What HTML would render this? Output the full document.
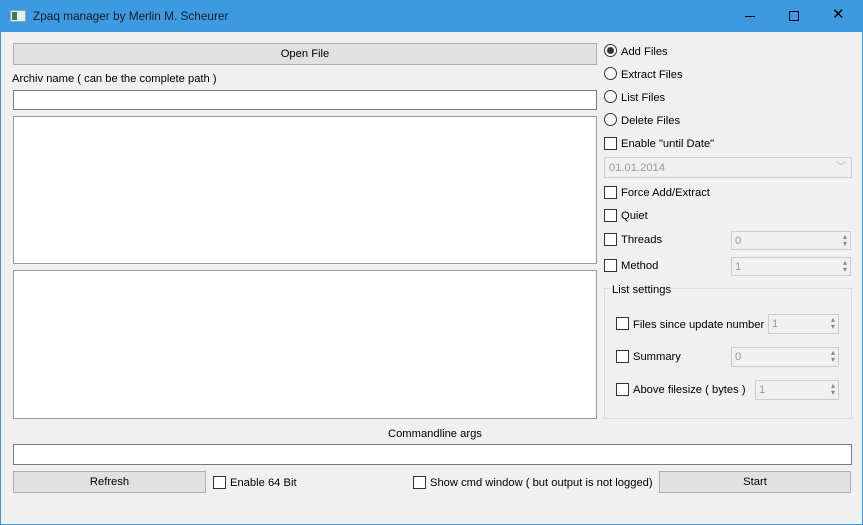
<!DOCTYPE html>
<html><head><style>
*{box-sizing:border-box;margin:0;padding:0}
body{width:863px;height:525px;position:relative;overflow:hidden;background:#f0f0f0;font:11.2px "Liberation Sans",sans-serif;color:#000;border:1px solid #3d9ae0}
.a{position:absolute}
.t{position:absolute;white-space:nowrap;line-height:14px;margin-top:1px}
.btn{position:absolute;background:#e1e1e1;border:1px solid #adadad;text-align:center;line-height:21px}
.in{position:absolute;background:#fff;border:1px solid #7a7a7a}
.cb{position:absolute;width:13px;height:13px;border:1px solid #333;background:#fff}
.rb{position:absolute;width:13px;height:13px;border:1px solid #333;border-radius:50%;background:#fff}
.sp{position:absolute;background:#f0f0f0;border:1px solid #ccc;color:#999;padding-left:3px;line-height:18px}
.sp:after{content:"▴\A▾";white-space:pre;position:absolute;right:3px;top:1px;font-size:8px;line-height:7px;color:#888}
</style></head><body>
<div class="a" style="left:-1px;top:-1px;width:863px;height:32px;background:#3d9ae0"></div>
<div class="a" style="left:9px;top:9px;width:16px;height:12px;background:#e8eef0;border:1px solid #8aa"></div>
<div class="a" style="left:11px;top:11px;width:5px;height:8px;background:#3a7a6a"></div>
<div class="t" style="left:32px;top:7px;font-size:11.8px;color:#1a1a2a">Zpaq manager by Merlin M. Scheurer</div>
<div class="a" style="left:744px;top:15px;width:10px;height:1px;background:#000"></div>
<div class="a" style="left:788px;top:10px;width:10px;height:10px;border:1px solid #000"></div>
<div class="t" style="left:831px;top:6px;font-size:15px">✕</div>

<div class="btn" style="left:12px;top:42px;width:584px;height:22px">Open File</div>
<div class="t" style="left:11px;top:70px">Archiv name ( can be the complete path )</div>
<div class="in" style="left:12px;top:89px;width:584px;height:20px"></div>
<div class="in" style="left:12px;top:115px;width:584px;height:148px;border-color:#999"></div>
<div class="in" style="left:12px;top:269px;width:584px;height:149px;border-color:#999"></div>

<div class="rb" style="left:603px;top:43px"></div><div class="a" style="left:606px;top:46px;width:7px;height:7px;border-radius:50%;background:#333"></div>
<div class="t" style="left:620px;top:43px">Add Files</div>
<div class="rb" style="left:603px;top:66px"></div><div class="t" style="left:620px;top:66px">Extract Files</div>
<div class="rb" style="left:603px;top:89px"></div><div class="t" style="left:620px;top:89px">List Files</div>
<div class="rb" style="left:603px;top:112px"></div><div class="t" style="left:620px;top:112px">Delete Files</div>
<div class="cb" style="left:603px;top:136px"></div><div class="t" style="left:620px;top:135px">Enable "until Date"</div>
<div class="a" style="left:603px;top:156px;width:248px;height:21px;border:1px solid #ccc;background:#f0f0f0;color:#999;padding-left:4px;line-height:20px">01.01.2014<span style="position:absolute;right:5px;top:0;font-size:10px;color:#aaa">﹀</span></div>
<div class="cb" style="left:603px;top:185px"></div><div class="t" style="left:620px;top:184px">Force Add/Extract</div>
<div class="cb" style="left:603px;top:208px"></div><div class="t" style="left:620px;top:207px">Quiet</div>
<div class="cb" style="left:603px;top:232px"></div><div class="t" style="left:620px;top:231px">Threads</div>
<div class="sp" style="left:730px;top:230px;width:120px;height:19px">0</div>
<div class="cb" style="left:603px;top:258px"></div><div class="t" style="left:620px;top:257px">Method</div>
<div class="sp" style="left:730px;top:256px;width:120px;height:19px">1</div>

<div class="a" style="left:603px;top:287px;width:248px;height:131px;border:1px solid #dcdcdc"></div>
<div class="t" style="left:609px;top:281px;background:#f0f0f0;padding:0 2px">List settings</div>
<div class="cb" style="left:615px;top:316px"></div><div class="t" style="left:632px;top:316px">Files since update number</div>
<div class="sp" style="left:767px;top:313px;width:71px;height:20px">1</div>
<div class="cb" style="left:615px;top:349px"></div><div class="t" style="left:632px;top:348px">Summary</div>
<div class="sp" style="left:730px;top:346px;width:108px;height:20px">0</div>
<div class="cb" style="left:615px;top:382px"></div><div class="t" style="left:632px;top:381px">Above filesize ( bytes )</div>
<div class="sp" style="left:754px;top:379px;width:84px;height:20px">1</div>

<div class="t" style="left:387px;top:425px">Commandline args</div>
<div class="in" style="left:12px;top:443px;width:839px;height:21px"></div>
<div class="btn" style="left:12px;top:470px;width:193px;height:22px">Refresh</div>
<div class="cb" style="left:212px;top:475px"></div><div class="t" style="left:229px;top:474px">Enable 64 Bit</div>
<div class="cb" style="left:412px;top:475px"></div><div class="t" style="left:429px;top:474px">Show cmd window ( but output is not logged)</div>
<div class="btn" style="left:658px;top:470px;width:192px;height:22px">Start</div>
</body></html>
